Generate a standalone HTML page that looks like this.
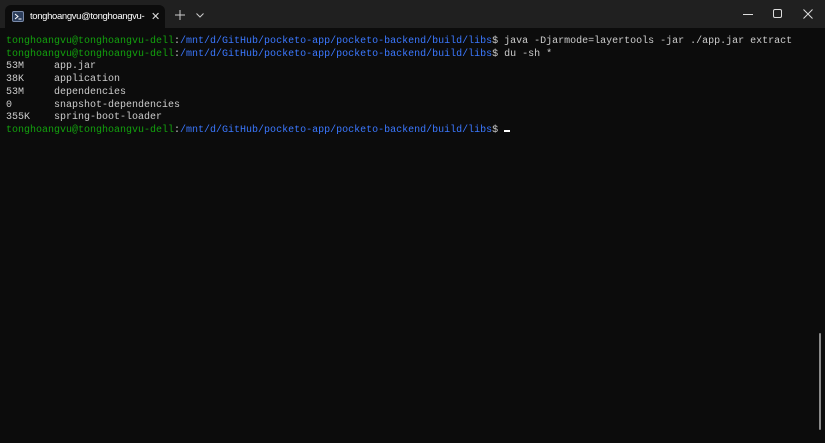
<!DOCTYPE html>
<html><head><meta charset="utf-8"><style>
html,body{margin:0;padding:0;width:825px;height:443px;overflow:hidden;background:#0c0c0c;}
.bar{position:absolute;left:0;top:0;width:825px;height:28px;background:#202020;}
.tab{position:absolute;left:5px;top:5px;width:160px;height:24px;background:#0c0c0c;border-radius:6px 6px 0 0;}
.tab .t{position:absolute;left:25px;top:6px;font:9.5px "Liberation Sans",sans-serif;color:#fff;letter-spacing:-0.35px;}
.tab .x{position:absolute;left:146px;top:5px;font:11px "Liberation Sans",sans-serif;color:#ddd;}
.term{position:absolute;left:6px;top:36px;font:10px/12.7px "Liberation Mono",monospace;color:#cccccc;white-space:pre;}
.g{color:#13a10e}.b{color:#3b78ff}
.cur{display:inline-block;width:6px;height:2px;background:#fff;vertical-align:0px;}
</style></head><body>
<div class="bar">
 <div class="tab">
  <svg style="position:absolute;left:7px;top:6px" width="12" height="11" viewBox="0 0 12 11"><rect x="0.5" y="0.5" width="11" height="10" rx="1.5" fill="#2c3e5c" stroke="#7a8aa8"/><path d="M3 3l3 2.5-3 2.5" stroke="#fff" fill="none" stroke-width="1"/><path d="M6.5 8h3" stroke="#fff"/></svg>
  <span class="t">tonghoangvu@tonghoangvu-</span>
  <span class="x">✕</span>
 </div>
 <svg style="position:absolute;left:175px;top:10px" width="10" height="10"><path d="M5 0v10M0 5h10" stroke="#ccc" stroke-width="1"/></svg>
 <svg style="position:absolute;left:196px;top:13px" width="8" height="5"><path d="M0.5 0.5l3.5 3.5 3.5-3.5" stroke="#ccc" fill="none"/></svg>
 <svg style="position:absolute;left:743px;top:14px" width="10" height="1"><path d="M0 .5h10" stroke="#ddd"/></svg>
 <svg style="position:absolute;left:773px;top:9px" width="10" height="10"><rect x="0.5" y="0.5" width="8" height="8" rx="1.5" fill="none" stroke="#ddd"/></svg>
 <svg style="position:absolute;left:803px;top:9px" width="10" height="10"><path d="M0.5 0.5l9 9M9.5 0.5l-9 9" stroke="#ddd"/></svg>
</div>
<div class="term"><span class="g">tonghoangvu@tonghoangvu-dell</span>:<span class="b">/mnt/d/GitHub/pocketo-app/pocketo-backend/build/libs</span>$ java -Djarmode=layertools -jar ./app.jar extract
<span class="g">tonghoangvu@tonghoangvu-dell</span>:<span class="b">/mnt/d/GitHub/pocketo-app/pocketo-backend/build/libs</span>$ du -sh *
53M     app.jar
38K     application
53M     dependencies
0       snapshot-dependencies
355K    spring-boot-loader
<span class="g">tonghoangvu@tonghoangvu-dell</span>:<span class="b">/mnt/d/GitHub/pocketo-app/pocketo-backend/build/libs</span>$ <span class="cur"></span></div>
<div style="position:absolute;left:819px;top:333px;width:2px;height:97px;background:#8a8a8a;border-radius:1px;"></div>
</body></html>
